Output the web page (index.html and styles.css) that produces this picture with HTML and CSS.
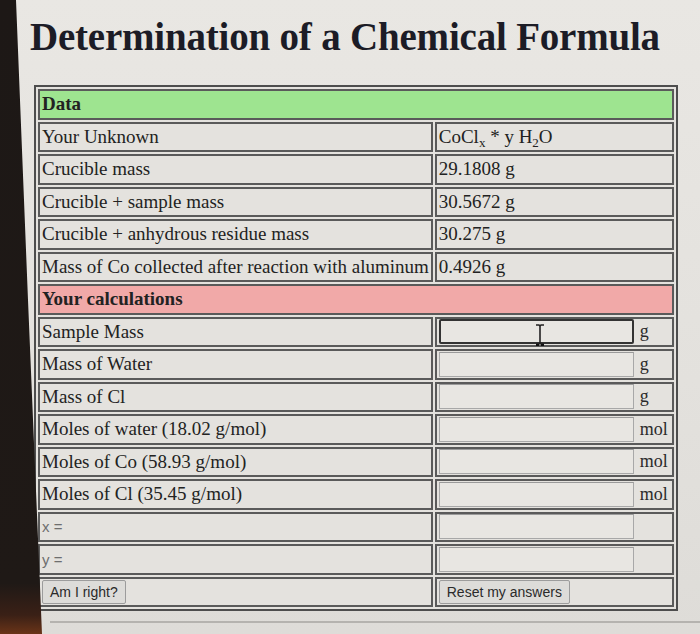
FILE: index.html
```html
<!DOCTYPE html>
<html>
<head>
<meta charset="utf-8">
<title>Determination of a Chemical Formula</title>
<link rel="stylesheet" href="styles.css">
</head>
<body>
<div class="bezel"></div>
<div class="page">
  <h1 class="title">Determination of a Chemical Formula</h1>
  <table class="sheet">
    <tr><th colspan="2" class="hdr green">Data</th></tr>
    <tr><td class="lbl">Your Unknown</td><td class="val">CoCl<sub>x</sub> * y H<sub>2</sub>O</td></tr>
    <tr><td class="lbl">Crucible mass</td><td class="val">29.1808 g</td></tr>
    <tr><td class="lbl">Crucible + sample mass</td><td class="val">30.5672 g</td></tr>
    <tr><td class="lbl">Crucible + anhydrous residue mass</td><td class="val">30.275 g</td></tr>
    <tr><td class="lbl">Mass of Co collected after reaction with aluminum</td><td class="val">0.4926 g</td></tr>
    <tr><th colspan="2" class="hdr pink">Your calculations</th></tr>
    <tr><td class="lbl">Sample Mass</td><td class="val cursor-cell"><input class="field focus" type="text"><span class="unit">g</span>
      <svg class="ibeam" width="12" height="22" viewBox="0 0 12 22"><path d="M2 1h3l1 1 1-1h3M6 2v17M2 20h3l1-1 1 1h3" fill="none" stroke="#222" stroke-width="1.6"/><rect x="2" y="20" width="3" height="2" fill="#111"/><rect x="7" y="20" width="3" height="2" fill="#111"/></svg></td></tr>
    <tr><td class="lbl">Mass of Water</td><td class="val"><input class="field" type="text"><span class="unit">g</span></td></tr>
    <tr><td class="lbl">Mass of Cl</td><td class="val"><input class="field" type="text"><span class="unit">g</span></td></tr>
    <tr><td class="lbl">Moles of water (18.02 g/mol)</td><td class="val"><input class="field" type="text"><span class="unit">mol</span></td></tr>
    <tr><td class="lbl">Moles of Co (58.93 g/mol)</td><td class="val"><input class="field" type="text"><span class="unit">mol</span></td></tr>
    <tr><td class="lbl">Moles of Cl (35.45 g/mol)</td><td class="val"><input class="field" type="text"><span class="unit">mol</span></td></tr>
    <tr><td class="lbl small">x =</td><td class="val"><input class="field" type="text"></td></tr>
    <tr><td class="lbl small">y =</td><td class="val"><input class="field" type="text"></td></tr>
    <tr><td class="lbl"><button class="btn" type="button">Am I right?</button></td><td class="val"><button class="btn" type="button">Reset my answers</button></td></tr>
  </table>
  <div class="rule"></div>
</div>
</body>
</html>
```

FILE: styles.css
```css
html, body {
  margin: 0;
  padding: 0;
}
body {
  width: 700px;
  height: 634px;
  overflow: hidden;
  background: linear-gradient(180deg, #e9e7e3 0%, #e3e1dd 60%, #dedcd8 100%);
  font-family: "Liberation Serif", "Times New Roman", serif;
  color: #222;
  position: relative;
}
.bezel {
  position: absolute;
  left: 0;
  top: 0;
  width: 44px;
  height: 634px;
  background: linear-gradient(180deg, #1d1816 0%, #1f1916 92%, #3a2016 97%, #6a3418 100%);
  clip-path: polygon(0 0, 16px 0, 28px 300px, 42px 634px, 0 634px);
  z-index: 2;
}
.page {
  padding-left: 30px;
}
.title {
  margin: 15px 0 0 0;
  font-size: 39px;
  line-height: 44px;
  font-weight: bold;
  color: #1c1c26;
  letter-spacing: -0.2px;
}
.sheet {
  margin: 26px 0 0 4px;
  width: 644px;
  border: 2px solid #4d4d4d;
  border-spacing: 2px;
  background: #e4e2de;
}
.sheet tr {
  height: 30.5px;
}
.sheet th, .sheet td {
  border: 2px solid #5a5a5a;
  padding: 0 2px;
  font-size: 19px;
  text-align: left;
  vertical-align: middle;
  white-space: nowrap;
}
.hdr {
  font-weight: bold;
}
.green {
  background: #9ee490;
}
.pink {
  background: #f1a9a8;
}
.lbl {
  width: 386px;
}
.val sub {
  font-size: 13px;
  vertical-align: -4px;
  line-height: 0;
}
.small {
  font-family: "Liberation Sans", Arial, sans-serif;
  font-size: 15px !important;
  color: #6e6e6e;
}
.field {
  width: 195px;
  height: 25px;
  box-sizing: border-box;
  border: 1px solid #a8a8a8;
  border-top-color: #9a9a9a;
  background: #e8e6e2;
  margin: 0;
  padding: 0 3px;
  vertical-align: middle;
  font-size: 15px;
}
.focus {
  border: 2px solid #333;
  border-radius: 2px;
}
.unit {
  font-size: 18px;
  margin-left: 6px;
  color: #2a2a2a;
  vertical-align: middle;
}
.cursor-cell {
  position: relative;
}
.ibeam {
  position: absolute;
  left: 97px;
  top: 5px;
}
.btn {
  font-family: "Liberation Sans", Arial, sans-serif;
  font-size: 14px;
  color: #2a2a2a;
  background: #dddcd9;
  border: 1px solid #9c9c9c;
  border-radius: 2px;
  padding: 3px 7px;
  margin: 0;
  vertical-align: middle;
}
.rule {
  margin: 10px 0 0 20px;
  height: 2px;
  background: #b5b3af;
}
```
